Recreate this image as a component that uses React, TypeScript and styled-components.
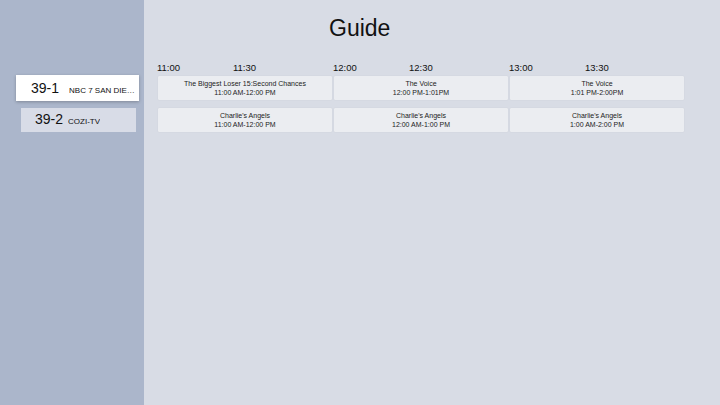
import React from 'react'
import styled, { createGlobalStyle } from 'styled-components'

const GlobalStyle = createGlobalStyle`
  html, body {
    margin: 0;
    padding: 0;
    width: 720px;
    height: 405px;
    overflow: hidden;
    font-family: "Liberation Sans", Arial, sans-serif;
  }
`

const Screen = styled.div`
  display: flex;
  width: 720px;
  height: 405px;
  background: #d8dce5;
  color: #111;
`

const Sidebar = styled.div`
  width: 144px;
  flex-shrink: 0;
  background: #abb6cb;
  display: flex;
  flex-direction: column;
  gap: 8px;
  padding: 76px 0 0 21px;
  box-sizing: border-box;
`

const ChannelItem = styled.div<{ $focused?: boolean }>`
  display: flex;
  align-items: baseline;
  gap: ${({ $focused }) => ($focused ? '10px' : '5px')};
  box-sizing: border-box;
  height: ${({ $focused }) => ($focused ? '26px' : '24px')};
  width: ${({ $focused }) => ($focused ? '123px' : '115px')};
  margin: ${({ $focused }) => ($focused ? '-1px 0 -1px -5px' : '0')};
  padding: ${({ $focused }) => ($focused ? '0 2px 0 15px' : '0 2px 0 14px')};
  line-height: ${({ $focused }) => ($focused ? '26px' : '22px')};
  background: ${({ $focused }) => ($focused ? '#ffffff' : '#d8dce7')};
  box-shadow: ${({ $focused }) => ($focused ? '0 1px 3px rgba(0,0,0,0.25)' : 'none')};
  white-space: nowrap;
`

const ChannelNumber = styled.span`
  font-size: 14px;
  flex-shrink: 0;
`

const ChannelName = styled.span`
  font-size: 8px;
  min-width: 0;
  overflow: hidden;
  text-overflow: ellipsis;
`

const Main = styled.div`
  flex: 1;
  padding: 0 0 0 14px;
  display: flex;
  flex-direction: column;
`

const Title = styled.h1`
  margin: 0 0 6px 171px;
  height: 56px;
  line-height: 56px;
  font-size: 23px;
  font-weight: normal;
`

const TimeHeader = styled.div`
  display: grid;
  grid-template-columns: repeat(3, 174px);
  column-gap: 2px;
  height: 12px;
  margin-bottom: 2px;
`

const HourGroup = styled.div`
  display: flex;
  font-size: 9.5px;
  line-height: 12px;
  margin-left: -1px;
`

const TimeLabel = styled.span`
  width: 76px;
`

const Rows = styled.div`
  display: flex;
  flex-direction: column;
  gap: 8px;
`

const ProgramRow = styled.div`
  display: grid;
  grid-template-columns: repeat(3, 174px);
  column-gap: 2px;
  height: 24px;
`

const ProgramCell = styled.div`
  background: #ebedf1;
  box-shadow: 0 0 1px rgba(0, 0, 0, 0.12);
  border-radius: 1px;
  display: flex;
  flex-direction: column;
  justify-content: center;
  align-items: center;
  font-size: 7px;
  line-height: 9px;
  color: #222;
`

const channels = [
  { num: '39-1', name: 'NBC 7 SAN DIEGO', focused: true },
  { num: '39-2', name: 'COZI-TV', focused: false },
]

const hours = [
  ['11:00', '11:30'],
  ['12:00', '12:30'],
  ['13:00', '13:30'],
]

const schedule = [
  [
    { title: 'The Biggest Loser 15:Second Chances', time: '11:00 AM-12:00 PM' },
    { title: 'The Voice', time: '12:00 PM-1:01PM' },
    { title: 'The Voice', time: '1:01 PM-2:00PM' },
  ],
  [
    { title: "Charlie's Angels", time: '11:00 AM-12:00 PM' },
    { title: "Charlie's Angels", time: '12:00 AM-1:00 PM' },
    { title: "Charlie's Angels", time: '1:00 AM-2:00 PM' },
  ],
]

const App: React.FC = () => {
  return (
    <>
      <GlobalStyle />
      <Screen>
        <Sidebar>
          {channels.map((c) => (
            <ChannelItem key={c.num} $focused={c.focused}>
              <ChannelNumber>{c.num}</ChannelNumber>
              <ChannelName>{c.name}</ChannelName>
            </ChannelItem>
          ))}
        </Sidebar>
        <Main>
          <Title>Guide</Title>
          <TimeHeader>
            {hours.map((h) => (
              <HourGroup key={h[0]}>
                <TimeLabel>{h[0]}</TimeLabel>
                <TimeLabel>{h[1]}</TimeLabel>
              </HourGroup>
            ))}
          </TimeHeader>
          <Rows>
            {schedule.map((row, i) => (
              <ProgramRow key={i}>
                {row.map((p, j) => (
                  <ProgramCell key={j}>
                    <div>{p.title}</div>
                    <div>{p.time}</div>
                  </ProgramCell>
                ))}
              </ProgramRow>
            ))}
          </Rows>
        </Main>
      </Screen>
    </>
  )
}

export default App
